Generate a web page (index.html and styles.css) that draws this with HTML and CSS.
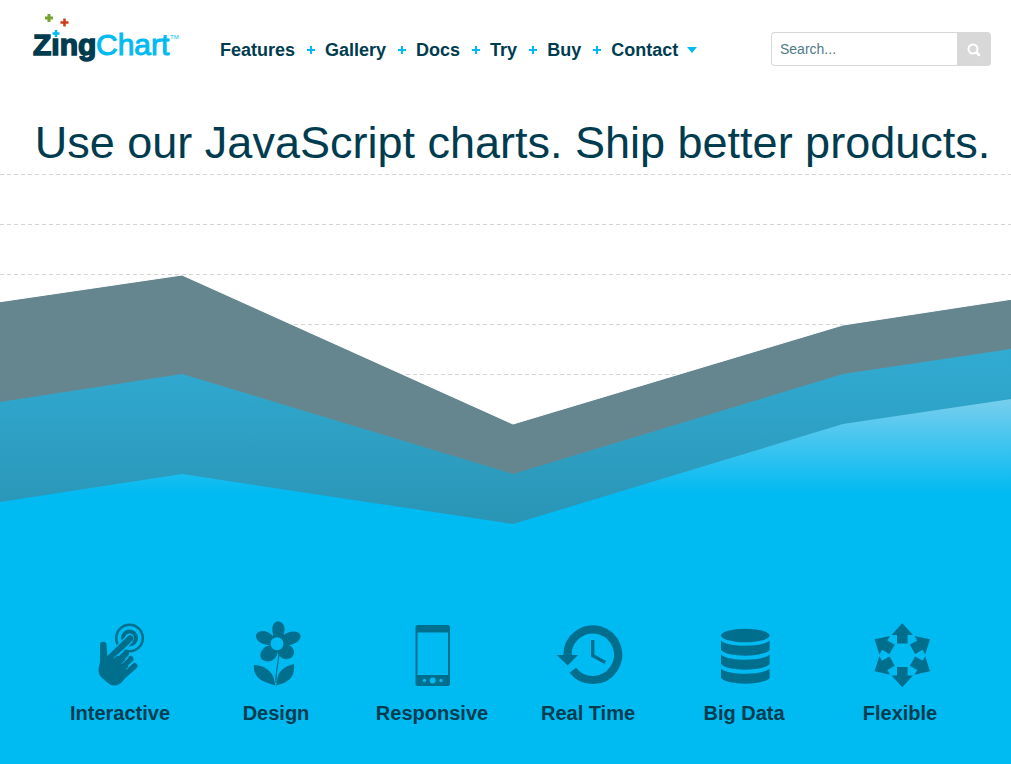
FILE: index.html
```html
<!DOCTYPE html>
<html lang="en">
<head>
  <meta charset="UTF-8">
  <meta name="viewport" content="width=device-width, initial-scale=1.0">
  <title>ZingChart</title>
  <link rel="stylesheet" href="styles.css">
</head>
<body>

  <header class="header">
    <a class="logo" href="#">
      <svg width="150" height="56" viewBox="0 0 150 56" role="img" aria-label="ZingChart">
        <text class="logo-zing" x="0" y="45">Zing</text>
        <text class="logo-chart" x="63" y="45">Chart</text>
        <text class="logo-tm" x="137" y="29">TM</text>
        <rect x="18" y="19" width="9" height="9" fill="#fff"/>
        <path d="M23 20v7M19.500 23.500h7" stroke="#00baf2" stroke-width="2.500"/>
        <path d="M16 4v8M12 8h8" stroke="#76a22f" stroke-width="3"/>
        <path d="M31.500 8.500v8M27.500 12.500h8" stroke="#d03a1c" stroke-width="2.500"/>
      </svg>
    </a>

    <nav class="nav">
      <a href="#">Features</a>
      <a href="#">Gallery</a>
      <a href="#">Docs</a>
      <a href="#">Try</a>
      <a href="#">Buy</a>
      <a class="has-menu" href="#">Contact</a>
    </nav>

    <form class="search">
      <input type="text" placeholder="Search..." aria-label="Search">
      <button type="button" aria-label="Submit search">
        <svg width="14" height="16" viewBox="0 0 14 16" fill="none" stroke="#fff">
          <circle cx="6" cy="8" r="4.500" stroke-width="2"/>
          <path d="M9.500 11.500l2.500 2.500" stroke-width="2.500" stroke-linecap="round"/>
        </svg>
      </button>
    </form>
  </header>

  <main>
    <h1>Use our JavaScript charts. Ship better products.</h1>

    <svg class="chart" viewBox="0 0 1011 360" preserveAspectRatio="none" aria-hidden="true">
      <defs>
        <linearGradient id="mid" gradientUnits="userSpaceOnUse" x1="0" y1="179" x2="0" y2="354">
          <stop offset="0" stop-color="#31abd3"/>
          <stop offset="1" stop-color="#2a95b5"/>
        </linearGradient>
        <linearGradient id="front" gradientUnits="userSpaceOnUse" x1="0" y1="229" x2="0" y2="324">
          <stop offset="0" stop-color="#78ceed"/>
          <stop offset="1" stop-color="#00baf2"/>
        </linearGradient>
      </defs>
      <path class="grid" d="M0 4.500H1011M0 54.500H1011M0 104.500H1011M0 154.500H1011M0 204.500H1011"/>
      <path fill="#66868f" stroke="#fff" d="M-2 132L182 105L513 254L843 155L1013 129V362H-2z"/>
      <path fill="url(#mid)" d="M0 232L182 204L513 304L843 204L1011 179V360H0z"/>
      <path fill="url(#front)" d="M0 332L182 304L513 354L843 254L1011 229V360H0z"/>
    </svg>

    <section class="features">
      <a class="feature" href="#">
        <svg class="icon" viewBox="0 0 70 70">
          <circle class="line" cx="44.500" cy="18" r="13.300" stroke-width="2.500"/>
          <circle class="line" cx="44.500" cy="18" r="6.500" stroke-width="4"/>
          <path class="gap" d="M45 18.500L27 36M41 33L32 42" stroke-width="9"/>
          <path class="line" d="M45 18.500L25 38" stroke-width="6.500" stroke-linecap="round"/>
          <path class="line" d="M41 33.500L30 44M45.500 39L34 50M49.500 46L37 57" stroke-width="6" stroke-linecap="round"/>
          <path d="M15 25a3 3 0 0 1 6.500 0L22.500 37L27 36L38 36L45 49.500L38 61Q34 65.500 29 65.500Q26 65.500 23 63L17 58Q13 54 13.500 49L15 42z"/>
          <path class="gap" d="M29 38L37 31M37 43.500L43.500 37.500M41 49.500L48 43" stroke-width="1"/>
        </svg>
        <span>Interactive</span>
      </a>

      <a class="feature" href="#">
        <svg class="icon" viewBox="0 0 70 70">
          <path d="M34.500 20C29 11 31 1.500 37 1.500C44 1.500 46 11 40 20z"/>
          <path d="M32 25C24 26 15 22 15 16C15 11 26 7 34 19z"/>
          <path d="M41 25C49 27 59.500 22 59.500 16.500C59.500 10 46 9 39 19z"/>
          <path d="M31 25C22 25 17 34 20.500 39C25 44 37 42 37 29z"/>
          <path d="M36 29C37 39 46 41.500 51 37C56 32 52 24 41 23z"/>
          <circle cx="36.500" cy="22.500" r="8.500"/>
          <circle cx="36" cy="23.700" r="6.500" fill="#00baf2"/>
          <path class="line" d="M38 32C38 42 34.500 50 35 63" stroke-width="1.200"/>
          <path d="M13 45C23 45 33 51 34 64L35 65.500C20 62 12 57 13 45zM53 44C43 46 36 52 36 62L35 65.500C49 62 54 57 53 44z"/>
        </svg>
        <span>Design</span>
      </a>

      <a class="feature" href="#">
        <svg class="icon" viewBox="0 0 70 70">
          <path fill-rule="evenodd" d="M20 5H51.500L53 6.500V64.500L51.500 66H20L18.500 64.500V6.500zM20.500 12.500V55H51V12.500z"/>
          <g fill="#00baf2">
            <circle cx="27.500" cy="60.500" r="1.700"/>
            <circle cx="35.700" cy="60.500" r="3"/>
            <circle cx="44" cy="60.500" r="1.700"/>
          </g>
        </svg>
        <span>Responsive</span>
      </a>

      <a class="feature" href="#">
        <svg class="icon" viewBox="0 0 70 70">
          <path class="line" d="M14.500 35A25.300 25.300 0 1 1 19.800 50.200" stroke-width="8.200"/>
          <path d="M3.700 35H25L14.700 45.500z"/>
          <path class="line" d="M39.700 20V35.500L52.300 42.500" stroke-width="3.400"/>
        </svg>
        <span>Real Time</span>
      </a>

      <a class="feature" href="#">
        <svg class="icon" viewBox="0 0 70 70">
          <ellipse cx="36.300" cy="15.500" rx="24.300" ry="6.800"/>
          <path d="M12 20.500C18 27.500 54.600 27.500 60.600 20.500V30C54.600 37.500 18 37.500 12 30z"/>
          <path d="M12 34.500C18 41.500 54.600 41.500 60.600 34.500V44C54.600 51.500 18 51.500 12 44z"/>
          <path d="M12 48.500C18 55.500 54.600 55.500 60.600 48.500V58C54.600 65.500 18 65.500 12 58z"/>
        </svg>
        <span>Big Data</span>
      </a>

      <a class="feature" href="#">
        <svg class="icon" viewBox="0 0 70 70">
          <defs>
            <path id="arrow" d="M37.300 3.300L48 15H42.600V23.500H32V15H26.600z"/>
          </defs>
          <use href="#arrow"/>
          <use href="#arrow" transform="rotate(60 37.300 35.300)"/>
          <use href="#arrow" transform="rotate(120 37.300 35.300)"/>
          <use href="#arrow" transform="rotate(180 37.300 35.300)"/>
          <use href="#arrow" transform="rotate(240 37.300 35.300)"/>
          <use href="#arrow" transform="rotate(300 37.300 35.300)"/>
        </svg>
        <span>Flexible</span>
      </a>
    </section>
  </main>

</body>
</html>
```
FILE: styles.css
```css
* {
  box-sizing: border-box;
  margin: 0;
  padding: 0;
}

body {
  min-height: 100vh;
  display: flex;
  flex-direction: column;
  background-color: #fff;
  color: #003c4f;
  font-family: "Liberation Sans", Arial, sans-serif;
}

a {
  color: inherit;
  text-decoration: none;
}

.header {
  display: flex;
  align-items: center;
  height: 98px;
  padding: 0 20px 0 33px;
}

.logo {
  height: 78px;
}

.logo svg {
  display: block;
  overflow: visible;
}

.logo-zing {
  font-size: 30px;
  font-weight: bold;
  fill: #003c4f;
  stroke: #003c4f;
  stroke-width: 1.5px;
}

.logo-chart {
  font-size: 30px;
  fill: #00baf2;
  stroke: #00baf2;
  stroke-width: 1px;
}

.logo-tm {
  font-size: 6px;
  fill: #00baf2;
}

.nav {
  display: flex;
  margin-left: 37px;
  padding-top: 2px;
  font-size: 18px;
  font-weight: bold;
  line-height: 20px;
}

.nav a {
  display: flex;
  align-items: center;
}

/* plus sign between the items */
.nav a + a::before {
  content: "";
  width: 8px;
  height: 8px;
  margin: 0 10px 0 12px;
  background:
    linear-gradient(#00baf2, #00baf2) center / 8px 2px no-repeat,
    linear-gradient(#00baf2, #00baf2) center / 2px 8px no-repeat;
}

.nav .has-menu::after {
  content: "";
  margin-left: 9px;
  border: 5px solid transparent;
  border-top: 6px solid #00baf2;
  border-bottom: 0;
}

.search {
  display: flex;
  width: 220px;
  height: 34px;
  margin-left: auto;
}

.search input {
  flex: 1;
  min-width: 0;
  padding: 0 8px;
  border: 1px solid #d8d8d8;
  border-right: 0;
  border-radius: 4px 0 0 4px;
  font-family: inherit;
  font-size: 14px;
  color: #003c4f;
}

.search input::placeholder {
  color: #4f7a86;
}

.search button {
  display: flex;
  align-items: center;
  justify-content: center;
  width: 34px;
  border: 0;
  border-radius: 0 4px 4px 0;
  background-color: #d8d8d8;
  cursor: pointer;
}

main {
  flex: 1;
  display: flex;
  flex-direction: column;
}

h1 {
  height: 72px;
  padding: 18px 0 0 14px;
  font-size: 45px;
  font-weight: normal;
  line-height: 54px;
  text-align: center;
  white-space: nowrap;
}

.chart {
  display: block;
  width: 100%;
  height: 360px;
}

.grid {
  fill: none;
  stroke: #d4d4d4;
  stroke-dasharray: 4 3;
}

.features {
  flex: 1;
  display: grid;
  grid-template-columns: repeat(6, 1fr);
  padding: 90px 33px 40px 42px;
  background-color: #00baf2;
}

.feature {
  display: flex;
  flex-direction: column;
  align-items: center;
  gap: 12px;
  font-size: 20px;
  font-weight: bold;
  line-height: 22px;
}

.icon {
  width: 70px;
  height: 70px;
  fill: #006f8e;
}

.line {
  fill: none;
  stroke: #006f8e;
}

.gap {
  fill: none;
  stroke: #00baf2;
}
```
